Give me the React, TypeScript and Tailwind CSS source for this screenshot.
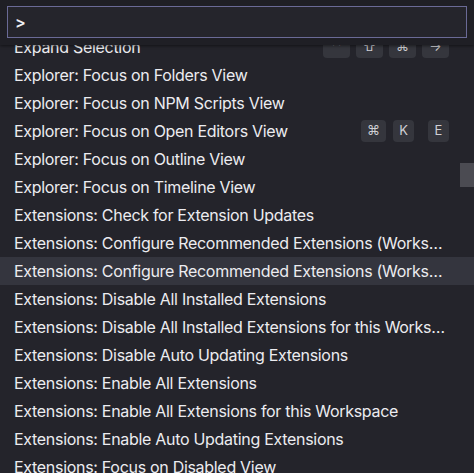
import { FC } from "react";

type TRow = {
  label: string;
  keys?: string[][];
  wide?: boolean;
  active?: boolean;
};

const rows: TRow[] = [
  { label: "Expand Selection", keys: [["⌃", "⇧", "⌘", "→"]], wide: true },
  { label: "Explorer: Focus on Folders View" },
  { label: "Explorer: Focus on NPM Scripts View" },
  { label: "Explorer: Focus on Open Editors View", keys: [["⌘", "K"], ["E"]] },
  { label: "Explorer: Focus on Outline View" },
  { label: "Explorer: Focus on Timeline View" },
  { label: "Extensions: Check for Extension Updates" },
  { label: "Extensions: Configure Recommended Extensions (Workspace Folder)" },
  { label: "Extensions: Configure Recommended Extensions (Workspace)", active: true },
  { label: "Extensions: Disable All Installed Extensions" },
  { label: "Extensions: Disable All Installed Extensions for this Workspace" },
  { label: "Extensions: Disable Auto Updating Extensions" },
  { label: "Extensions: Enable All Extensions" },
  { label: "Extensions: Enable All Extensions for this Workspace" },
  { label: "Extensions: Enable Auto Updating Extensions" },
  { label: "Extensions: Focus on Disabled View" },
];

const Key: FC<{ k: string; wide?: boolean }> = ({ k, wide }) => (
  <span
    className={`flex h-[22px] items-center justify-center rounded-[4px] bg-[#35363d] text-[13px] text-[#cfcfd4] ${
      wide ? "w-[27px]" : "min-w-[21px] px-[6px]"
    }`}
  >
    {k}
  </span>
);

const Row: FC<{ row: TRow }> = ({ row }) => (
  <div
    className={`flex h-[28px] items-center pl-[14px] pr-[25px] ${
      row.active ? "bg-[#34353e]" : ""
    }`}
  >
    <span className="min-w-0 flex-1 truncate text-[16px] tracking-[-0.3px] text-[#ececf0]">
      {row.label}
    </span>
    {row.keys && (
      <div className="ml-3 flex shrink-0 gap-[14px]">
        {row.keys.map((chord, i) => (
          <div key={i} className={`flex ${row.wide ? "gap-[6px]" : "gap-[7px]"}`}>
            {chord.map((k) => (
              <Key key={k} k={k} wide={row.wide} />
            ))}
          </div>
        ))}
      </div>
    )}
  </div>
);

const App = () => {
  return (
    <div
      className="flex h-[473px] w-[474px] flex-col overflow-hidden bg-[#24242b]"
      style={{ fontFamily: "Inter, 'Noto Sans', sans-serif" }}
    >
      <div className="relative z-10 shrink-0 bg-[#1f1f25] px-[7px] pt-[6px] pb-[7px] shadow-[0_1px_3px_rgba(0,0,0,0.5)]">
        <div className="flex h-[32px] items-center border border-[#6a6a96] bg-[#25252c] px-[7px] text-[16px] font-semibold text-[#f0f0f4]">
          &gt;
        </div>
      </div>
      <div className="relative flex min-h-0 flex-1">
        <div className="min-w-0 flex-1 overflow-hidden">
          <div className="-mt-[12px]">
            {rows.map((row) => (
              <Row key={row.label} row={row} />
            ))}
          </div>
        </div>
        <div className="absolute right-0 top-[118px] h-[24px] w-[14px] bg-[#4b4b52]" />
      </div>
    </div>
  );
};

export default App;
